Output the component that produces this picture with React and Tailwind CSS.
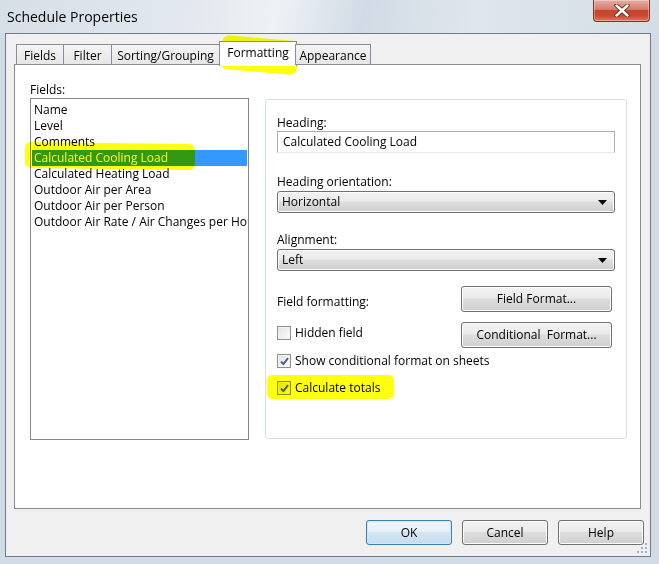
import React from "react";

const btnBase =
  "flex items-center justify-center rounded-[3px] border border-[#707070] bg-[linear-gradient(#f2f2f2_0%,#ebebeb_45%,#dddddd_50%,#cfcfcf_100%)] shadow-[inset_0_0_0_1px_#fcfcfc] text-black";

function Check({ checked }) {
  return (
    <span className="flex h-[14px] w-[14px] shrink-0 items-center justify-center border border-[#8e8f8f] bg-[linear-gradient(135deg,#e0e0e0,#fefefe)] shadow-[inset_0_0_0_1px_#f4f4f4]">
      {checked && (
        <svg width="11" height="11" viewBox="0 0 11 11">
          <path d="M2 5.5 L4.4 8.2 L9 2.2" fill="none" stroke="#4a5f8e" strokeWidth="1.9" strokeLinejoin="round" />
        </svg>
      )}
    </span>
  );
}

function Select({ value, className = "" }) {
  return (
    <div className={`${btnBase} !justify-between h-[22px] w-[338px] pl-[4px] pr-[7px] ${className}`}>
      <span className="leading-[16px]">{value}</span>
      <svg width="9" height="5" viewBox="0 0 9 5">
        <path d="M0 0 H9 L4.5 5 Z" fill="#000" />
      </svg>
    </div>
  );
}

export default function App() {
  const fields = [
    "Name",
    "Level",
    "Comments",
    "Calculated Cooling Load",
    "Calculated Heating Load",
    "Outdoor Air per Area",
    "Outdoor Air per Person",
    "Outdoor Air Rate / Air Changes per Hour",
  ];
  const tabs = [
    { label: "Fields", w: "w-[48px]" },
    { label: "Filter", w: "w-[49px]" },
    { label: "Sorting/Grouping", w: "w-[109px]" },
    { label: "Formatting", w: "w-[78px]", sel: true },
    { label: "Appearance", w: "w-[76px]" },
  ];
  return (
    <div className="relative flex h-[564px] w-[659px] flex-col overflow-hidden bg-[#d2dce6] font-['Open_Sans',sans-serif] text-[12px] text-black">
      {/* title bar */}
      <div className="flex h-[33px] shrink-0 items-start justify-between bg-[linear-gradient(100deg,#d6dee7_0%,#e3e9ef_30%,#eef2f6_42%,#d2dbe5_55%,#dfe6ed_72%,#d4dde6_100%)]">
        <div className="pl-[7px] pt-[7px] text-[14px] leading-[20px]">Schedule Properties</div>
        <div className="mr-[9px] flex h-[22px] w-[57px] items-center justify-center rounded-b-[4px] border border-t-0 border-[#7a3428] bg-[linear-gradient(#e6ada3_0%,#d77a6a_45%,#c4452f_50%,#c9492f_75%,#e07a52_100%)] shadow-[inset_0_0_0_1px_rgba(255,255,255,0.35)]">
          <svg width="16" height="13" viewBox="0 0 16 13">
            <path d="M2.5 1.5 L13.5 11.5 M13.5 1.5 L2.5 11.5" stroke="#5a2a22" strokeWidth="4.2" strokeLinecap="round" />
            <path d="M2.5 1.5 L13.5 11.5 M13.5 1.5 L2.5 11.5" stroke="#ffffff" strokeWidth="2.4" strokeLinecap="round" />
          </svg>
        </div>
      </div>

      {/* client area */}
      <div className="relative ml-[5px] mr-[8px] flex h-[524px] shrink-0 flex-col border border-[#6f7b88] bg-[#f0f0f0]">
        {/* tabs */}
        <div className="relative z-10 mt-[7px] flex h-[24px] items-end pl-[10px]">
          {tabs.map((t, i) =>
            t.sel ? (
              <div
                key={t.label}
                className={`${t.w} -mx-[1px] flex h-[25px] -mb-[1px] items-start justify-center border border-b-0 border-[#898c95] bg-white pt-[3px] leading-[16px]`}
              >
                {t.label}
              </div>
            ) : (
              <div
                key={t.label}
                className={`${t.w} ${i > 0 ? "-ml-px" : ""} flex h-[21px] items-start justify-center whitespace-nowrap border border-[#898c95] bg-[linear-gradient(#f4f4f4,#e6e6e6)] pt-[3px] leading-[16px]`}
              >
                {t.label}
              </div>
            )
          )}
        </div>

        {/* tab panel */}
        <div className="-mt-px ml-[8px] mr-[9px] flex h-[445px] border border-[#898c95] bg-white pl-[15px]">
          {/* fields column */}
          <div className="flex w-[219px] flex-col pt-[17px]">
            <div className="h-[15px] leading-[16px]">Fields:</div>
            <div className="mt-px flex h-[342px] flex-col overflow-hidden border border-[#828790] bg-white px-px pt-[3px]">
              {fields.map((f, i) => (
                <div
                  key={f}
                  className={`h-[16px] whitespace-nowrap pl-[2px] leading-[16px] ${
                    i === 3 ? "bg-[#3399ff] text-white" : ""
                  }`}
                >
                  {f}
                </div>
              ))}
            </div>
          </div>

          {/* group box */}
          <div className="ml-[16px] mt-[34px] flex h-[340px] w-[362px] flex-col rounded-[3px] border border-[#d5dfe5] px-[11px]">
            <div className="mt-[15px] h-[16px] leading-[16px]">Heading:</div>
            <div className="flex h-[22px] w-[338px] items-center border border-[#abadb3] border-b-[#e3e9ef] pl-[5px]">
              Calculated Cooling Load
            </div>
            <div className="mt-[21px] h-[16px] leading-[16px]">Heading orientation:</div>
            <Select value="Horizontal" className="mt-[1px]" />
            <div className="mt-[19px] h-[16px] leading-[16px]">Alignment:</div>
            <Select value="Left" className="mt-[1px]" />

            <div className="mt-[15px] flex h-[26px] w-[338px] items-center justify-between pr-[3px]">
              <span className="pt-[5px] leading-[16px]">Field formatting:</span>
              <div className={`${btnBase} h-[26px] w-[151px]`}>Field Format...</div>
            </div>
            <div className="mt-[10px] flex h-[26px] w-[338px] items-center justify-between pr-[3px]">
              <label className="-mt-[5px] flex items-center gap-[4px] leading-[16px]">
                <Check />
                Hidden field
              </label>
              <div className={`${btnBase} h-[26px] w-[151px] whitespace-pre`}>Conditional  Format...</div>
            </div>
            <label className="mt-[5px] flex h-[16px] items-center gap-[4px] leading-[16px]">
              <Check checked />
              Show conditional format on sheets
            </label>
            <label className="mt-[11px] flex h-[16px] items-center gap-[4px] leading-[16px]">
              <Check checked />
              Calculate totals
            </label>
          </div>
        </div>

        {/* bottom buttons */}
        <div className="mt-[11px] flex justify-end gap-[10px] pr-[6px]">
          <div className="flex h-[25px] w-[86px] items-center justify-center rounded-[3px] border border-[#3c7fb1] bg-[linear-gradient(#f0f6fb_0%,#e6f0f8_45%,#d4e5f3_50%,#c6dcee_100%)] shadow-[inset_0_0_0_1px_#cfeafb]">
            OK
          </div>
          <div className={`${btnBase} h-[25px] w-[86px]`}>Cancel</div>
          <div className={`${btnBase} h-[25px] w-[86px]`}>Help</div>
        </div>

        {/* resize grip */}
        <svg className="absolute bottom-[3px] right-[3px]" width="11" height="11" viewBox="0 0 11 11">
          {[
            [9, 1], [9, 5], [9, 9], [5, 5], [5, 9], [1, 9],
          ].map(([x, y]) => (
            <rect key={`${x}-${y}`} x={x} y={y} width="2" height="2" fill="#a7b0ba" />
          ))}
        </svg>
      </div>

      {/* highlighter marks */}
      <div className="pointer-events-none absolute left-[221px] top-[38px] h-[34px] w-[77px] rotate-[5deg] rounded-[7px] bg-[#ffff10] mix-blend-multiply" />
      <div className="pointer-events-none absolute left-[25px] top-[143px] h-[26px] w-[170px] rotate-[0.8deg] rounded-[6px] bg-[#ffff10] mix-blend-multiply" />
      <div className="pointer-events-none absolute left-[267px] top-[375px] h-[24px] w-[127px] rounded-[5px] bg-[#ffff10] mix-blend-multiply" />
    </div>
  );
}
